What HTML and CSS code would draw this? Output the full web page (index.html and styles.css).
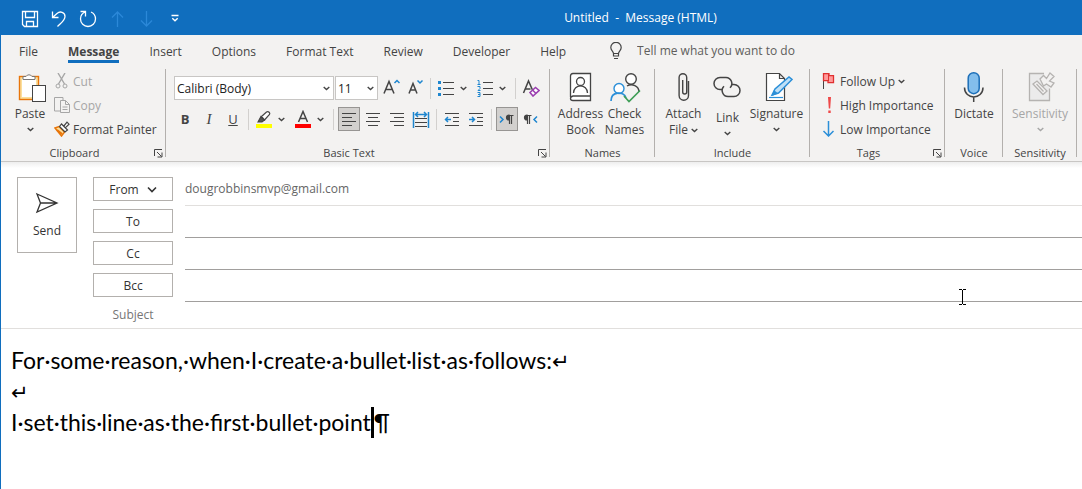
FILE: index.html
```html
<!DOCTYPE html>
<html lang="en">
<head>
  <meta charset="UTF-8" />
  <title>Untitled - Message (HTML)</title>
  <meta name="viewport" content="width=device-width, initial-scale=1.0" />
  <link rel="stylesheet" href="styles.css">
</head>
<body>
  <svg class="defs" aria-hidden="true">
    <symbol id="chev" viewBox="0 0 7 5"><path d="M.7 1l2.8 2.6L6.3 1" fill="none" stroke="currentColor" stroke-width="1.4"/></symbol>
    <symbol id="launch" viewBox="0 0 9 9"><path d="M.5 7V.5H8M3 3l4.500 4.500M8 3.500V8H3.500" fill="none" stroke="currentColor"/></symbol>
  </svg>

  <div class="window">
    <!-- Title bar -->
    <header class="titlebar">
      <div class="quick">
        <button class="quick-btn" aria-label="Save"><svg width="18" height="18" viewBox="0 0 18 18"><path d="M1.500 1.500h15v15h-13l-2-2zM4.500 1.500v6h9v-6M5.500 16v-4.500h7V16"/></svg></button>
        <button class="quick-btn" aria-label="Undo"><svg width="18" height="18" viewBox="0 0 18 18"><path d="M2.500 1.500v6h6M2.800 7.200L7 3.500C10 .8 15 2 15 6.500c0 4-4 6.500-7.500 10"/></svg></button>
        <button class="quick-btn" aria-label="Redo"><svg width="18" height="18" viewBox="0 0 18 18"><path d="M1.500 1.500h5v5M6.300 2C3 3.200 1.500 6 1.500 9a7.500 7.500 0 0 0 15 0c0-3-1.800-5.800-4.500-7"/></svg></button>
        <button class="quick-btn dim" aria-label="Previous item" disabled><svg width="18" height="18" viewBox="0 0 18 18"><path d="M9.500 17V2M4 7.500L9.500 2 15 7.500"/></svg></button>
        <button class="quick-btn dim" aria-label="Next item" disabled><svg width="18" height="18" viewBox="0 0 18 18"><path d="M9.500 1v15M4 10.500L9.500 16 15 10.500"/></svg></button>
        <button class="quick-btn" aria-label="Customize"><svg width="18" height="18" viewBox="0 0 18 18"><path d="M5.500 5.500h7M6.300 8.200L9 10.700l2.700-2.500" stroke-width="1.400"/></svg></button>
      </div>
      <h1 class="title">Untitled&nbsp; -&nbsp; Message (HTML)</h1>
    </header>

    <nav class="tabs">
      <button class="tab">File</button>
      <button class="tab active">Message</button>
      <button class="tab">Insert</button>
      <button class="tab">Options</button>
      <button class="tab">Format Text</button>
      <button class="tab">Review</button>
      <button class="tab">Developer</button>
      <button class="tab">Help</button>
      <label class="tellme">
        <svg width="12" height="18" viewBox="0 0 12 18"><path d="M3.500 11.500C3.500 9.500.8 8.500.8 5.500a5.200 5.200 0 0 1 10.400 0c0 3-2.700 4-2.700 6zM3.500 11.500v2.500h5v-2.500M4 16.500h4" fill="none" stroke="#444" stroke-width="1.200"/></svg>
        <input type="text" placeholder="Tell me what you want to do" aria-label="Tell me what you want to do">
      </label>
    </nav>

    <!-- Ribbon -->
    <div class="ribbon">
      <section class="group clipboard">
        <div class="group-body">
          <button class="big">
            <svg width="32" height="32" viewBox="0 0 32 32">
              <rect x="5.500" y="5.500" width="19" height="23" fill="#fbdf9c" stroke="#e8750a" stroke-width="1.400"/>
              <rect x="8" y="8" width="14" height="18" fill="#fff"/>
              <path d="M9 8.500V5.500h3a3.500 3.500 0 0 1 6 0h3v3z" fill="#fff" stroke="#777"/>
              <rect x="18.500" y="14.500" width="13" height="16" fill="#fff" stroke="#444"/>
            </svg>
            <span>Paste</span>
            <svg class="chev"><use href="#chev"/></svg>
          </button>
          <div class="stack">
            <button class="small" disabled>
              <svg width="16" height="16" viewBox="0 0 16 16" fill="none" stroke="#a6a6a6"><path d="M4 0l6.500 11M11 0L4.500 11" stroke-width="1.400"/><circle cx="4" cy="13" r="2"/><circle cx="11" cy="13" r="2"/></svg>
              Cut
            </button>
            <button class="small" disabled>
              <svg width="16" height="16" viewBox="0 0 16 16" fill="none" stroke="#a6a6a6"><path d="M6 14H.5V.5H9V3"/><path d="M6.500 3.500h5l4 4v8h-9zM11.500 3.500v4h4M8.500 10h5M8.500 12.500h5"/></svg>
              Copy
            </button>
            <button class="small">
              <svg width="16" height="16" viewBox="0 0 16 16"><path d="M1 7l4-1.500 5.500 5.500L7.500 15z" fill="#fbdf9c" stroke="#e8750a" stroke-width="1.500"/><path d="M3 9l5 4" stroke="#e8750a" stroke-width="2"/><path d="M5.500 5.500L7.500 3l6 6-2.500 2zM9.500 5.500L13 1.200l2 2-4 4" fill="#fff" stroke="#444" stroke-width="1.200"/></svg>
              Format Painter
            </button>
          </div>
        </div>
        <div class="group-name">Clipboard</div>
        <button class="launcher" aria-label="Clipboard options"><svg width="9" height="9"><use href="#launch"/></svg></button>
      </section>

      <section class="group text">
        <div class="group-body rows">
          <div class="row">
            <div class="combos">
              <div class="combo font"><select aria-label="Font"><option>Calibri (Body)</option></select><svg class="chev"><use href="#chev"/></svg></div>
              <div class="combo size"><select aria-label="Font size"><option>11</option></select><svg class="chev"><use href="#chev"/></svg></div>
            </div>
            <button class="tool" aria-label="Grow font"><svg width="18" height="18" viewBox="0 0 18 18"><path d="M2 14.500L7 2.500l5 12M4 10.500h6" stroke-width="1.500"/><path class="blue" d="M12.500 4L15 1.500 17.500 4"/></svg></button>
            <button class="tool" aria-label="Shrink font"><svg width="18" height="18" viewBox="0 0 18 18"><path d="M3 14.500L7 4.500l4 10M4.500 11h5" stroke-width="1.500"/><path class="blue" d="M11.500 1.500L14 4l2.500-2.500"/></svg></button>
            <i class="sep"></i>
            <button class="tool" aria-label="Bullets"><svg width="18" height="18" viewBox="0 0 18 18"><path d="M6 3.500h11M6 9.500h11M6 15.500h11"/><path class="dots" d="M1 3.500h3M1 9.500h3M1 15.500h3"/></svg></button>
            <button class="drop" aria-label="Bullet styles"><svg class="chev"><use href="#chev"/></svg></button>
            <button class="tool" aria-label="Numbering"><svg width="18" height="18" viewBox="0 0 18 18"><path d="M7 3.500h10M7 9.500h10M7 15.500h10"/><path class="blue thin" d="M1.500 1.500H3v4M1.500 5.500h3M1.500 7.500H4v2L2 11.500h2.500M1.500 13.500H4v4H1.500M2 15.500h2"/></svg></button>
            <button class="drop" aria-label="Number styles"><svg class="chev"><use href="#chev"/></svg></button>
            <i class="sep"></i>
            <button class="tool" aria-label="Clear formatting"><svg width="18" height="18" viewBox="0 0 18 18"><path d="M1.500 14L6.500 2l4 9M3.500 10h5" stroke-width="1.500"/><path class="eraser" d="M8 13.500l5.500-5 3.500 3-6 5.500z"/><path class="eraser" d="M10.500 11l3.500 3.500"/></svg></button>
          </div>
          <div class="row">
            <button class="tool b">B</button>
            <button class="tool i">I</button>
            <button class="tool u">U</button>
            <i class="sep"></i>
            <button class="tool" aria-label="Highlight"><svg width="18" height="18" viewBox="0 0 18 18"><path class="swatch yellow" d="M1 14h16v4H1z"/><path d="M3 12l3-5.500L9.500 10 7 12z" fill="#555"/><path d="M6.500 6.500l5-4.500c2-1 4 1 3 2.500L9.500 10z" fill="#fff"/></svg></button>
            <button class="drop" aria-label="Highlight colors"><svg class="chev"><use href="#chev"/></svg></button>
            <button class="tool" aria-label="Font color"><svg width="18" height="18" viewBox="0 0 18 18"><path class="swatch red" d="M1 14h16v4H1z"/><path d="M4.500 12L9 1.500 13.500 12M6 8.500h6" stroke-width="1.500"/></svg></button>
            <button class="drop" aria-label="Font colors"><svg class="chev"><use href="#chev"/></svg></button>
            <i class="sep"></i>
            <button class="tool on" aria-label="Align left"><svg width="18" height="18" viewBox="0 0 18 18"><path d="M2 3.500h14M2 7.500h10M2 11.500h14M2 15.500h10"/></svg></button>
            <button class="tool" aria-label="Center"><svg width="18" height="18" viewBox="0 0 18 18"><path d="M2 3.500h14M4 7.500h10M2 11.500h14M4 15.500h10"/></svg></button>
            <button class="tool" aria-label="Align right"><svg width="18" height="18" viewBox="0 0 18 18"><path d="M2 3.500h14M6 7.500h10M2 11.500h14M6 15.500h10"/></svg></button>
            <button class="tool" aria-label="Justify"><svg width="18" height="18" viewBox="0 0 18 18"><path d="M3 8.500h12M3 12.500h12M3 16.500h12"/><path class="blue" d="M1.500 2v16M16.500 2v16M4 4.500h10M6 2L3.500 4.500 6 7M12 2l2.500 2.500L12 7"/></svg></button>
            <i class="sep"></i>
            <button class="tool" aria-label="Decrease indent"><svg width="18" height="18" viewBox="0 0 18 18"><path d="M2 3.500h14M10 7.500h6M10 11.500h6M2 15.500h14"/><path class="blue" d="M8 9.500H2.500M5 7L2.500 9.500 5 12"/></svg></button>
            <button class="tool" aria-label="Increase indent"><svg width="18" height="18" viewBox="0 0 18 18"><path d="M2 3.500h14M10 7.500h6M10 11.500h6M2 15.500h14"/><path class="blue" d="M2 9.500h5.500M5 7l2.500 2.500L5 12"/></svg></button>
            <i class="sep"></i>
            <button class="tool on" aria-label="Left to right"><svg width="18" height="18" viewBox="0 0 18 18"><path class="blue" d="M2 6.500L5 9.500 2 12.500"/><path d="M10 5.500h5.500M11.500 5v9M13.500 5v9"/><path d="M11 5a2.500 2.500 0 0 0 0 5z" fill="#444"/></svg></button>
            <button class="tool" aria-label="Right to left"><svg width="18" height="18" viewBox="0 0 18 18"><path class="blue" d="M15 6.500L12 9.500l3 3"/><path d="M4 5.500h5.500M5.500 5v9M7.500 5v9"/><path d="M5 5a2.500 2.500 0 0 0 0 5z" fill="#444"/></svg></button>
          </div>
        </div>
        <div class="group-name">Basic Text</div>
        <button class="launcher" aria-label="Font options"><svg width="9" height="9"><use href="#launch"/></svg></button>
      </section>

      <section class="group names">
        <div class="group-body">
          <button class="big">
            <svg width="32" height="32" viewBox="0 0 32 32" fill="#fff" stroke="#444" stroke-width="1.300"><path d="M5.500 26V5q0-2.500 2.500-2.500h17.500v27H8Q5.500 29.500 5.500 27.500t2.500-2.500h17.500"/><circle cx="15.500" cy="10.500" r="4"/><path d="M8.500 22c0-9.500 14-9.500 14 0" fill="none"/></svg>
            <span>Address<br>Book</span>
          </button>
          <button class="big">
            <svg width="32" height="32" viewBox="0 0 32 32" fill="#fff" stroke="#444" stroke-width="1.400"><circle cx="22" cy="8" r="5.300"/><path d="M18 15c5-3 12 0 12 6" fill="none"/><circle cx="10" cy="17.500" r="5" stroke="#2b8fd8"/><path d="M2 30c0-10 13-10 15-3" fill="none" stroke="#2b8fd8" stroke-width="1.700"/><path d="M15 25l5 5.500L31 19.500" fill="none" stroke="#3f9e57" stroke-width="1.700"/></svg>
            <span>Check<br>Names</span>
          </button>
        </div>
        <div class="group-name">Names</div>
      </section>

      <section class="group include">
        <div class="group-body">
          <button class="big">
            <svg width="32" height="32" viewBox="0 0 32 32" fill="none" stroke="#444" stroke-width="1.400"><path d="M20.500 10V24.500a4.700 4.700 0 0 1-9.400 0V6.500a3.800 3.800 0 0 1 7.600 0V21a2 2 0 0 1-4 0V9"/></svg>
            <span>Attach<br>File <svg class="chev"><use href="#chev"/></svg></span>
          </button>
          <button class="big">
            <svg width="32" height="36" viewBox="0 0 32 36" fill="none" stroke="#444" stroke-width="1.500"><path d="M10 18.500H8a6 6 0 0 1 0-12h6a6 6 0 0 1 4 10.300"/><path d="M20 13.500h2a6 6 0 0 1 0 12h-6a6 6 0 0 1-4-10.300"/></svg>
            <span>Link</span>
            <svg class="chev"><use href="#chev"/></svg>
          </button>
          <button class="big wide">
            <svg width="32" height="32" viewBox="0 0 32 32" fill="#fff" stroke="#444" stroke-width="1.200"><path d="M5.500 2.500h13l5 5v22h-18zM18.500 2.500v5h5"/><path d="M11 24l3-6L28 6l3 2.500L17.500 22z" fill="#bfe0f7" stroke="#2b8fd8" stroke-width="1.500"/><path d="M11 25l2-6 4 3.500z" fill="#2b8fd8" stroke="none"/><path d="M8 26.500h14" stroke="#2b8fd8"/></svg>
            <span>Signature</span>
            <svg class="chev"><use href="#chev"/></svg>
          </button>
        </div>
        <div class="group-name">Include</div>
      </section>

      <section class="group tags">
        <div class="group-body">
          <div class="stack">
            <button class="small">
              <svg width="16" height="16" viewBox="0 0 16 16"><path d="M2.500 0v16" stroke="#444"/><path d="M2.500.7H8v2h4.500v7H7v-2H2.500z" fill="#ff9a9a" stroke="#e03030" stroke-width="1.300"/><path d="M7.500 1v7" stroke="#e03030"/></svg>
              Follow Up <svg class="chev"><use href="#chev"/></svg>
            </button>
            <button class="small">
              <svg width="16" height="16" viewBox="0 0 16 16" fill="#ee4848"><path d="M7 0h3L9.200 11.500H7.800zM7.300 13.500h2.400V16H7.300z"/></svg>
              High Importance
            </button>
            <button class="small">
              <svg width="16" height="16" viewBox="0 0 16 16" fill="none" stroke="#2b8fd8" stroke-width="1.500"><path d="M7.500 0v15M2.500 10l5 5 5-5"/></svg>
              Low Importance
            </button>
          </div>
        </div>
        <div class="group-name">Tags</div>
        <button class="launcher" aria-label="Tag options"><svg width="9" height="9"><use href="#launch"/></svg></button>
      </section>

      <section class="group voice">
        <div class="group-body">
          <button class="big">
            <svg width="32" height="32" viewBox="0 0 32 32"><rect x="10.200" y="1.700" width="11" height="21" rx="5.500" fill="#83beec" stroke="#1c6fb8" stroke-width="1.500"/><path d="M6.500 16.500c0 12.500 18.500 12.500 18.500 0M15.700 26v5" fill="none" stroke="#444" stroke-width="1.500"/></svg>
            <span>Dictate</span>
          </button>
        </div>
        <div class="group-name">Voice</div>
      </section>

      <section class="group sensitivity">
        <div class="group-body">
          <button class="big wide" disabled>
            <svg width="32" height="32" viewBox="0 0 32 32" fill="#ebebeb" stroke="#b5b3b1" stroke-width="1.300"><path d="M20 2.500H5.500v27h20v-12"/><path d="M9 13l4-3 10 10-4 3.500zM12.500 13l7 7.500" fill="#f3f2f1"/><path d="M16 8l3.500-3.500 3 3L26 2l4 3.500-4.500 4.500 4.500 2-3 4-4.500-3-3 2z" fill="#f3f2f1"/></svg>
            <span>Sensitivity</span>
            <svg class="chev"><use href="#chev"/></svg>
          </button>
        </div>
        <div class="group-name">Sensitivity</div>
      </section>
    </div>

    <!-- Addressing -->
    <form class="envelope">
      <button type="button" class="send">
        <svg width="24" height="22" viewBox="0 0 24 22" fill="none" stroke="#333" stroke-width="1.300"><path d="M2 2l20 9-20 9 3.500-9zM5.500 11H22"/></svg>
        Send
      </button>
      <div class="fields">
        <div class="field light">
          <button type="button" class="pick">From <svg width="10" height="7" viewBox="0 0 10 7"><path d="M1 1.500l4 4 4-4" fill="none" stroke="#333" stroke-width="1.600"/></svg></button>
          <input type="text" aria-label="From" value="dougrobbinsmvp@gmail.com">
        </div>
        <div class="field">
          <button type="button" class="pick">To</button>
          <input type="text" aria-label="To">
        </div>
        <div class="field">
          <button type="button" class="pick">Cc</button>
          <input type="text" aria-label="Cc">
        </div>
        <div class="field">
          <button type="button" class="pick">Bcc</button>
          <input type="text" aria-label="Bcc">
          <svg class="pointer" width="7" height="16" viewBox="0 0 7 16"><path d="M0 .5h3M4 .5h3M3.500 1v14M0 15.500h3M4 15.500h3" stroke="#000" fill="none"/></svg>
        </div>
        <div class="field subject">
          <label for="subject">Subject</label>
          <input type="text" id="subject">
        </div>
      </div>
    </form>

    <main class="message" contenteditable="true" spellcheck="false">
      <p>For·some·reason,·when·I·create·a·bullet·list·as·follows:<span class="mark">↵</span></p>
      <p><span class="mark">↵</span></p>
      <p>I·set·this·line·as·the·first·bullet·point<span class="caret"></span>¶</p>
    </main>
  </div>
</body>
</html>
```
FILE: styles.css
```css
* {
  box-sizing: border-box;
}

body {
  margin: 0;
  font-family: "Open Sans", "Noto Sans", sans-serif;
  font-size: 12px;
  color: #444;
  background: #fff;
}

button, input, select {
  font: inherit;
  color: inherit;
  background: none;
  border: none;
  border-radius: 0;
  padding: 0;
  margin: 0;
}

input {
  outline: none;
  min-width: 0;
}

.defs {
  display: none;
}

.window {
  min-height: 100vh;
  border-left: 1px solid #106ebe;
}

/* title bar */
.titlebar {
  display: flex;
  align-items: center;
  height: 35px;
  background: #106ebe;
  color: #fff;
}

.quick {
  display: flex;
  width: 198px;
  padding-left: 14px;
}

.quick-btn {
  display: flex;
  justify-content: center;
  width: 29px;
  padding-top: 2px;
}

.quick-btn svg {
  fill: none;
  stroke: #fff;
  stroke-width: 1.3;
}

.quick-btn.dim svg {
  stroke: #2b88d8;
}

.title {
  flex: 1;
  margin: 0;
  font-size: 12px;
  font-weight: normal;
  text-align: center;
}

/* tabs */
.tabs {
  display: flex;
  gap: 30px;
  height: 31px;
  padding: 3px 0 3px 18px;
  background: #f3f2f1;
}

.tab {
  padding-top: 4px;
  border-bottom: 3px solid transparent;
  white-space: nowrap;
}

.tab.active {
  font-weight: bold;
  border-bottom-color: #106ebe;
}

.tellme {
  display: flex;
  flex: 1;
  align-items: center;
  gap: 15px;
  margin-left: 14px;
}

.tellme input {
  flex: 1;
}

.tellme input::placeholder {
  color: #605e5c;
}

/* ribbon */
.ribbon {
  display: flex;
  padding-top: 3px;
  background: #f3f2f1;
  border-bottom: 1px solid #c8c6c4;
  font-size: 12px;
}

.group {
  position: relative;
  display: flex;
  flex-direction: column;
  flex-shrink: 0;
  background: linear-gradient(#b3b0ad, #b3b0ad) right top / 1px 88px no-repeat;
}

.group-body {
  display: flex;
  justify-content: center;
  height: 76px;
}

.group-name {
  height: 16px;
  line-height: 16px;
  font-size: 11px;
  text-align: center;
}

.clipboard { width: 165px; }
.text { width: 384px; }
.names { width: 105px; }
.include { width: 155px; }
.tags { width: 135px; }
.voice { width: 58px; }
.sensitivity { width: 74px; }

.clipboard .group-body {
  justify-content: flex-start;
  gap: 2px;
  padding-left: 7px;
}

.tags .group-body {
  justify-content: flex-start;
  padding-left: 11px;
}

.clipboard .group-name,
.text .group-name,
.tags .group-name {
  padding-right: 18px;
}

.launcher {
  position: absolute;
  right: 3px;
  bottom: 3px;
  display: flex;
}

.chev {
  width: 7px;
  height: 5px;
}

.big {
  display: flex;
  flex-direction: column;
  align-items: center;
  width: 44px;
  padding-top: 2px;
  line-height: 16px;
  white-space: nowrap;
}

.big.wide {
  width: 54px;
}

.big span {
  margin-top: 3px;
}

.big > .chev {
  margin-top: 5px;
}

.big span .chev {
  vertical-align: middle;
}

.big:disabled,
.small:disabled {
  color: #a6a6a6;
}

.stack {
  display: flex;
  flex-direction: column;
}

.small {
  display: flex;
  align-items: center;
  gap: 3px;
  height: 24px;
  white-space: nowrap;
}

.rows {
  flex-direction: column;
  justify-content: flex-start;
  gap: 7px;
  padding: 7px 0 0 7px;
}

.row {
  display: flex;
  align-items: center;
  height: 24px;
}

.combos {
  display: flex;
  gap: 1px;
  padding: 0 1px;
}

.combo {
  display: grid;
  align-items: center;
  height: 24px;
  background: #fff;
  border: 1px solid #c8c6c4;
}

.combo select {
  grid-area: 1 / 1;
  appearance: none;
  padding-left: 2px;
  color: #222;
}

.combo .chev {
  grid-area: 1 / 1;
  justify-self: end;
  margin-right: 3px;
  pointer-events: none;
}

.combo.font { width: 160px; }
.combo.size { width: 43px; }

.tool {
  display: flex;
  align-items: center;
  justify-content: center;
  width: 24px;
  height: 24px;
  font-size: 13px;
}

.tool svg {
  fill: none;
  stroke: #444;
  stroke-width: 1.2;
}

.tool svg .blue {
  stroke: #1e86cf;
  stroke-width: 1.5;
}

.tool svg .thin {
  stroke-width: 1;
}

.tool svg .dots {
  stroke: #1e86cf;
  stroke-width: 3;
}

.tool svg .eraser {
  fill: #fff;
  stroke: #9b3fb0;
  stroke-width: 1.6;
}

.swatch {
  stroke: none;
}

.swatch.yellow { fill: #ff0; }
.swatch.red { fill: #f00; }

.tool.on {
  background: #d2d0ce;
  border: 1px solid #979593;
  width: 22px;
  margin: 0 1px;
}

.b { font-weight: bold; }
.i { font-style: italic; font-family: "Liberation Serif", serif; font-size: 15px; }
.u { text-decoration: underline; }

.drop {
  display: flex;
  width: 15px;
  padding-left: 2px;
}

.sep {
  width: 1px;
  height: 21px;
  margin: 0 3px;
  background: #d2d0ce;
}

/* envelope */
.envelope {
  display: flex;
  align-items: flex-start;
  padding-top: 12px;
  background: linear-gradient(#eee, #fff 6px);
  border-bottom: 1px solid #e1dfdd;
}

.send {
  display: flex;
  flex-direction: column;
  align-items: center;
  gap: 8px;
  width: 60px;
  height: 76px;
  margin: 3px 16px 0;
  padding-top: 14px;
  border: 1px solid #b3b0ad;
  color: #333;
}

.fields {
  flex: 1;
}

.field {
  position: relative;
  display: flex;
  align-items: flex-start;
  gap: 12px;
  height: 32px;
}

.pick {
  display: flex;
  align-items: center;
  justify-content: center;
  gap: 8px;
  width: 80px;
  height: 24px;
  margin-top: 3px;
  border: 1px solid #b3b0ad;
  color: #333;
}

.field input {
  flex: 1;
  height: 32px;
  padding-bottom: 2px;
  border-bottom: 1px solid #a19f9d;
  color: #666;
}

.field.light input {
  border-bottom-color: #e1dfdd;
}

.subject {
  height: 26px;
}

.subject label {
  width: 80px;
  line-height: 26px;
  text-align: center;
  color: #767676;
}

.subject input {
  height: 26px;
  border: none;
}

/* I-beam mouse pointer */
.pointer {
  position: absolute;
  right: 116px;
  top: 19px;
}

/* message body */
.message {
  padding: 16px 10px;
  font-family: Lato, sans-serif;
  font-size: 23px;
  line-height: 31px;
  color: #000;
  outline: none;
}

.message p {
  margin: 0;
  height: 31px;
}

.mark {
  font-family: "DejaVu Sans", sans-serif;
  font-size: 21px;
  line-height: 1;
}

.caret {
  display: inline-block;
  width: 3px;
  height: 31px;
  background: #000;
  vertical-align: top;
}
```
